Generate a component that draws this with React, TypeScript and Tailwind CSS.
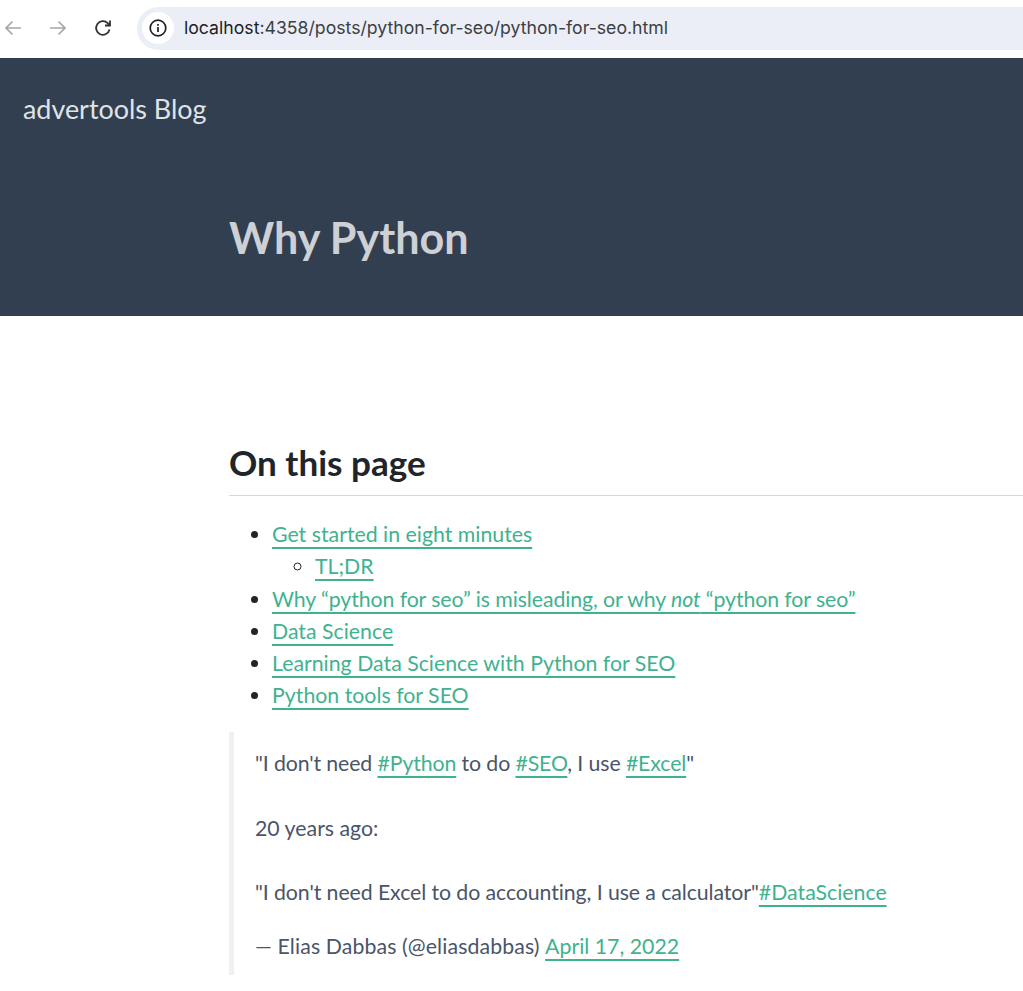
import React from "react";

const L = ({ children }: { children: React.ReactNode }) => (
  <a className="text-[#3fb28f] underline decoration-[1.5px] underline-offset-[5px]">{children}</a>
);

export default function App() {
  return (
    <div className="w-[1023px] h-[991px] overflow-hidden bg-white font-['Lato','Liberation_Sans',sans-serif]">
      <div className="h-[58px] flex items-center bg-white pb-[2px]">
        <div className="w-[137px] flex items-center pl-[3px] gap-[25px]">
          <svg width="20" height="20" viewBox="0 0 20 20" fill="none" stroke="#a6a6a6" strokeWidth="1.7"><path d="M18 10H3M9.5 3.5 3 10l6.5 6.5" /></svg>
          <svg width="20" height="20" viewBox="0 0 20 20" fill="none" stroke="#a6a6a6" strokeWidth="1.7"><path d="M2 10h15M10.5 3.5 17 10l-6.500 6.500" /></svg>
          <svg width="20" height="20" viewBox="0 0 20 20" fill="none" stroke="#303134" strokeWidth="1.8"><path d="M16.500 11.500A6.800 6.800 0 1 1 14.700 5.200L17 7.500M17 2.500v5h-5" /></svg>
        </div>
        <div className="flex-1 h-[43px] rounded-l-full bg-[#ebeef7] flex items-center pl-[5px] gap-[10px] font-['Inter',sans-serif] text-[17.66px]">
          <div className="w-[32px] h-[32px] rounded-full bg-white flex items-center justify-center">
            <svg width="18" height="18" viewBox="0 0 18 18" fill="none" stroke="#1f1f1f" strokeWidth="1.700"><circle cx="9" cy="9" r="7.800" /><path d="M9 8v5M9 5v1.700" /></svg>
          </div>
          <div className="text-[#3c4043]"><span className="text-[#1f1f1f]">localhost</span>:4358/posts/python-for-seo/python-for-seo.html</div>
        </div>
      </div>
      <div className="h-[258px] bg-[#323f50] flex flex-col">
        <div className="pl-[23px] pt-[33px] text-[26.9px] leading-[36px] text-[#dfe3e7]">advertools Blog</div>
        <h1 className="pl-[229px] mt-[80px] text-[43.1px] leading-[60px] font-bold text-[#cdd0d4]">Why Python</h1>
      </div>
      <div className="pl-[229px] pt-[121px]">
        <h2 className="text-[35.1px] leading-[50px] font-bold text-[#212529] border-b border-[#d5d7d9] pb-[8px]">On this page</h2>
        <ul className="mt-[22px] ml-[43px] list-disc text-[21.3px] leading-[32.3px] text-[#212529]">
          <li><L>Get started in eight minutes</L>
            <ul className="ml-[43px] list-[circle]"><li><L>TL;DR</L></li></ul>
          </li>
          <li className="tracking-[-0.1px]"><L>Why “python for seo” is misleading, or why <em>not</em> “python for seo”</L></li>
          <li><L>Data Science</L></li>
          <li><L>Learning Data Science with Python for SEO</L></li>
          <li><L>Python tools for SEO</L></li>
        </ul>
        <blockquote className="mt-[20px] h-[243px] border-l-[5px] border-[#eff0f1] pl-[21px] pt-[15px] text-[21.3px] leading-[32.3px] text-[#4a5568]">
          <p className="tracking-[-0.12px]">"I don't need <L>#Python</L> to do <L>#SEO</L>, I use <L>#Excel</L>"</p>
          <p className="mt-[33px]">20 years ago:</p>
          <p className="mt-[32px]"><span className="tracking-[-0.09px]">"I don't need Excel to do accounting, I use a calculator"</span><L>#DataScience</L></p>
          <p className="mt-[21px]"><span className="tracking-[0.1px]">— Elias Dabbas (@eliasdabbas) </span><L>April 17, 2022</L></p>
        </blockquote>
      </div>
    </div>
  );
}
